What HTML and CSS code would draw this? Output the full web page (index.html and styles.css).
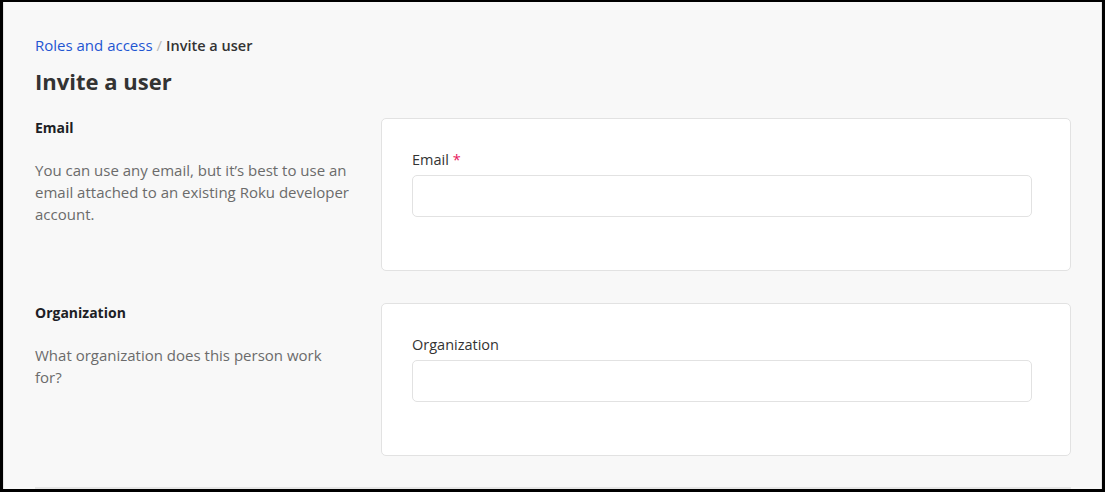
FILE: index.html
```html
<!DOCTYPE html>
<html lang="en">
<head>
    <meta charset="UTF-8">
    <meta name="viewport" content="width=device-width, initial-scale=1.0">
    <title>Invite a user</title>
    <link rel="stylesheet" href="styles.css">
</head>
<body>
    <div class="frame">
        <main class="page">
            <!-- Breadcrumb -->
            <nav class="breadcrumb">
                <a href="#">Roles and access</a>
                <span class="sep">/</span>
                <span class="current">Invite a user</span>
            </nav>

            <h1 class="page-title">Invite a user</h1>

            <!-- Email section -->
            <section class="form-row">
                <div class="form-info">
                    <h2>Email</h2>
                    <p>You can use any email, but it&rsquo;s best to use an email attached to an existing Roku developer account.</p>
                </div>
                <div class="card">
                    <label for="email">Email <span class="required">*</span></label>
                    <input type="email" id="email">
                </div>
            </section>

            <!-- Organization section -->
            <section class="form-row">
                <div class="form-info">
                    <h2>Organization</h2>
                    <p>What organization does this person work for?</p>
                </div>
                <div class="card">
                    <label for="organization">Organization</label>
                    <input type="text" id="organization">
                </div>
            </section>

            <hr class="divider">
        </main>
    </div>
</body>
</html>
```

FILE: styles.css
```css
/* General Styles */
html, body {
    margin: 0;
    padding: 0;
}

body {
    font-family: "Open Sans", "Liberation Sans", sans-serif;
    background-color: #000;
}

.frame {
    box-sizing: border-box;
    height: 492px;
    border-top: 2px solid #000;
    border-left: 3px solid #000;
    border-right: 3px solid #000;
    border-bottom: 3px solid #000;
    overflow: hidden;
}

.page {
    box-sizing: border-box;
    height: 100%;
    padding: 33px 30px 0 31px;
    background-color: #f8f8f8;
    border-left: 1px solid #e4e4e4;
    border-right: 1px solid #e4e4e4;
}

/* Breadcrumb */
.breadcrumb {
    display: flex;
    align-items: baseline;
    gap: 4px;
    height: 20px;
    font-size: 15px;
    line-height: 20px;
    color: #333;
}

.breadcrumb a {
    color: #1f56d2;
    text-decoration: none;
}

.breadcrumb .sep {
    color: #bbb;
}

.breadcrumb .current {
    font-size: 14.5px;
    font-weight: 600;
}

.page-title {
    margin: 12px 0 23px;
    font-size: 22px;
    line-height: 28px;
    font-weight: 700;
    color: #333;
}

/* Form rows */
.form-row {
    display: grid;
    grid-template-columns: 316px 1fr;
    column-gap: 30px;
    margin-bottom: 32px;
}

.form-info h2 {
    margin: 0 0 21px;
    font-size: 14px;
    line-height: 20px;
    font-weight: 700;
    color: #1d1f26;
}

.form-info p {
    margin: 0;
    font-size: 15px;
    line-height: 22px;
    color: #6b6b6b;
}

.card {
    display: flex;
    flex-direction: column;
    gap: 5px;
    background-color: #fff;
    border: 1px solid #e2e2e2;
    border-radius: 5px;
    padding: 31px 38px 53px 30px;
}

.card label {
    font-size: 14.5px;
    line-height: 20px;
    color: #333;
}

.required {
    color: #e8175d;
}

.card input {
    box-sizing: border-box;
    width: 100%;
    height: 42px;
    padding: 0 12px;
    border: 1px solid #e2e2e2;
    border-radius: 5px;
    background-color: #fff;
    font-family: inherit;
    font-size: 14px;
}

.divider {
    margin: -1px 0 0;
    border: none;
    border-top: 2px solid #e6e6e6;
}
```
